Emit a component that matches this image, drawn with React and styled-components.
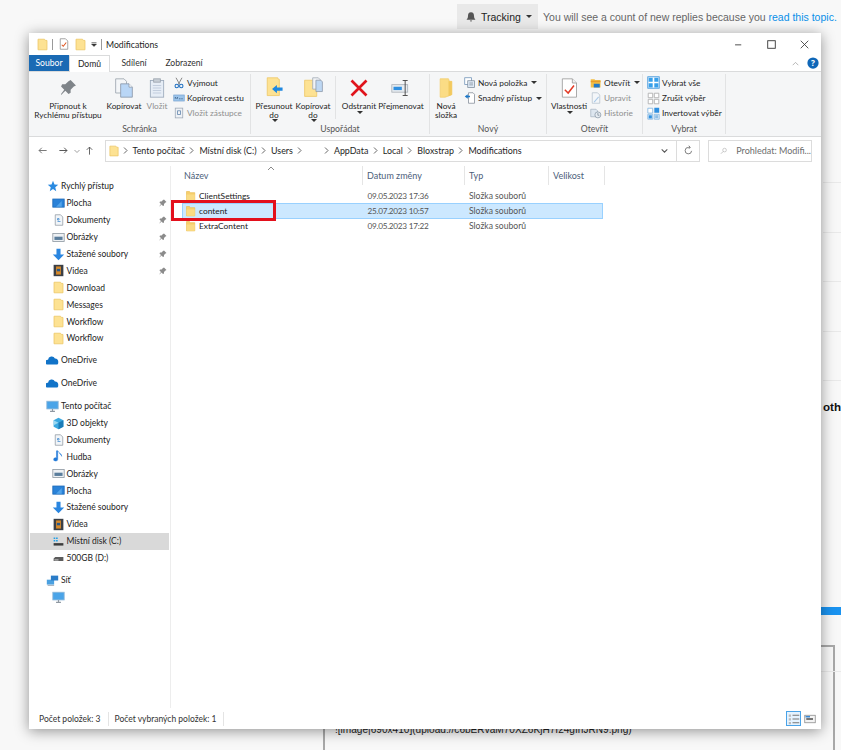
import React from "react";
import styled, { createGlobalStyle } from "styled-components";

const Global = createGlobalStyle`
  html, body { margin: 0; padding: 0; background: #f8f8f8; }
  * { box-sizing: border-box; }
`;

const Page = styled.div`
  position: relative;
  width: 841px;
  height: 750px;
  overflow: hidden;
  background: #f8f8f8;
  font-family: "Liberation Sans", Arial, sans-serif;
`;
const TopicBar = styled.div`
  display: flex;
  align-items: center;
  height: 25px;
  margin: 4px 0 0 457px;
  width: 384px;
  font-size: 10.5px;
  color: #666;
  white-space: nowrap;
`;
const TrackButton = styled.div`
  display: flex;
  align-items: center;
  gap: 4px;
  width: 81px;
  height: 25px;
  padding-left: 8px;
  margin-right: 5px;
  background: #e9e9e9;
  color: #222;
  font-size: 10.5px;
`;
const Link = styled.span`color: #0a8fe8;`;
const Caret = styled.span`
  display: inline-block;
  border: 3px solid transparent;
  border-top: 3px solid ${p => p.$c || "#333"};
  border-bottom: 0;
  margin-left: ${p => p.$ml || 2}px;
  vertical-align: middle;
`;
const Dividers = styled.div`
  margin: 105px 0 0 823px;
  display: flex;
  flex-direction: column;
`;
const Divider = styled.div`
  height: 49.4px;
  border-bottom: 1px solid #e9e9e9;
`;
const CutHeading = styled.div`
  margin: 19px 0 0 823px;
  height: 14px;
  font-size: 11.6px;
  line-height: 14px;
  font-weight: 700;
  color: #111;
`;
const ProgressBar = styled.div`
  margin: 193px 0 0 400px;
  height: 8px;
  background: #1a93f0;
`;
const Composer = styled.div`
  margin: 30px 0 0 323px;
  width: 512px;
  height: 120px;
  border: 2px solid #a8a8a8;
  border-bottom: 0;
  font-size: 10.1px;
  color: #222;
  padding: 77px 0 0 10px;
  white-space: nowrap;
`;
const ComposerRule = styled.div`
  height: 1px;
  background: #e9e9e9;
  margin: -53px -10px 52px;
`;

const Win = styled.div`
  position: absolute;
  left: 29px;
  top: 33px;
  width: 792px;
  height: 696px;
  background: #fff;
  display: flex;
  flex-direction: column;
  font-family: Lato, "Open Sans", sans-serif;
  font-size: 8.6px;
  color: #1e1e1e;
  box-shadow: 0 2px 13px rgba(0,0,0,.42);
  white-space: nowrap;
`;
const TitleBar = styled.div`
  display: flex;
  align-items: center;
  height: 22px;
  padding-left: 7px;
  flex: none;
`;
const QatSep = styled.div`
  width: 1px;
  height: 11px;
  background: #9a9a9a;
  margin: 0 ${p => p.$r || 6}px 0 ${p => p.$l || 5}px;
`;
const QatGap = styled.div`width: ${p => p.$w}px;`;
const Title = styled.div`font-size: 8.7px; flex: 1;`;
const WinControls = styled.div`
  display: flex;
  align-items: center;
  padding-right: 11px;
  gap: 22px;
`;
const TabRow = styled.div`
  display: flex;
  height: 16px;
  flex: none;
  align-items: stretch;
  position: relative;
`;
const FileTab = styled.div`
  width: 40px;
  background: #1a6ab4;
  color: #fff;
  display: flex;
  align-items: center;
  justify-content: center;
`;
const Tab = styled.div`
  width: ${p => p.$w}px;
  display: flex;
  align-items: center;
  justify-content: center;
  color: #333;
  ${p => p.$active && `
    background: #fff;
    border: 1px solid #dadbdc;
    border-bottom: 0;
    height: 17px;
    margin-bottom: -1px;
    z-index: 1;
    color: #1e1e1e;
  `}
`;
const TabRight = styled.div`
  margin-left: auto;
  display: flex;
  align-items: center;
  gap: 7px;
  padding-right: 2px;
`;
const Ribbon = styled.div`
  display: flex;
  height: 66px;
  flex: none;
  background: #f5f6f7;
  border-top: 1px solid #dadbdc;
  border-bottom: 1px solid #dadbdc;
  padding-top: 2px;
`;
const Group = styled.div`
  width: ${p => p.$w}px;
  display: flex;
  flex-direction: column;
  border-right: 1px solid #e2e3e4;
  height: 60px;
  flex: none;
`;
const GroupBody = styled.div`
  display: flex;
  height: 50px;
  padding-left: ${p => p.$pl || 0}px;
`;
const GroupLabel = styled.div`
  text-align: center;
  font-size: 8.7px;
  color: #555;
  line-height: 10px;
`;
const Big = styled.div`
  width: ${p => p.$w}px;
  margin-left: ${p => p.$ml || 0}px;
  display: flex;
  flex-direction: column;
  align-items: center;
  text-align: center;
  line-height: 8.7px;
  font-size: 8.25px;
  color: ${p => p.$off ? "#8f8f8f" : "#1e1e1e"};
`;
const BigIcon = styled.div`
  height: 28px;
  padding-bottom: 1px;
  display: flex;
  align-items: center;
  justify-content: center;
  flex: none;
`;
const BigSep = styled.div`
  width: 1px;
  height: 43px;
  background: #e2e3e4;
  margin: 2px 5px 0 3px;
`;
const SmallCol = styled.div`
  display: flex;
  flex-direction: column;
  margin-left: ${p => p.$ml || 0}px;
  padding-top: 1px;
`;
const Small = styled.div`
  display: flex;
  align-items: center;
  height: 15.4px;
  gap: 2px;
  font-size: 8.3px;
  color: ${p => p.$off ? "#8f8f8f" : "#1e1e1e"};
`;
const AddressRow = styled.div`
  display: flex;
  align-items: center;
  height: 29px;
  padding-bottom: 1.5px;
  flex: none;
`;
const NavButtons = styled.div`
  width: 76px;
  display: flex;
  align-items: center;
  padding-left: 8px;
  flex: none;
`;
const AddressBox = styled.div`
  width: 595px;
  height: 22px;
  border: 1px solid #dcdcdc;
  display: flex;
  align-items: center;
  padding-left: 2px;
  flex: none;
`;
const Crumb = styled.span`
  color: #1e1e1e;
  font-size: 8.9px;
`;
const CrumbArrow = styled.svg`
  width: 5px;
  height: 7px;
  margin: 0 5px 0 ${p => p.$ml ?? 4.5}px;
  flex: none;
`;
const AddressTools = styled.div`
  margin-left: auto;
  display: flex;
  align-items: center;
  height: 100%;
`;
const ChevronCell = styled.div`
  width: 24px;
  display: flex;
  justify-content: center;
`;
const RefreshCell = styled.div`
  width: 23px;
  height: 100%;
  border-left: 1px solid #dcdcdc;
  display: flex;
  align-items: center;
  justify-content: center;
`;
const SearchBox = styled.div`
  width: 104px;
  height: 22px;
  margin-left: 8px;
  border: 1px solid #dcdcdc;
  display: flex;
  align-items: center;
  padding-left: 11px;
  gap: 9px;
  color: #6d6d6d;
  font-size: 9px;
  flex: none;
`;
const Content = styled.div`
  display: flex;
  flex: 1;
  min-height: 0;
`;
const NavPane = styled.div`
  width: 142px;
  flex: none;
  border-right: 1px solid #ededed;
  padding: 12px 1px 0;
  display: flex;
  flex-direction: column;
`;
const NavRow = styled.div`
  display: flex;
  align-items: center;
  height: 16.9px;
  flex: none;
  gap: ${p => p.$child ? 1.5 : 2}px;
  padding-left: ${p => p.$child ? 22 : 16}px;
  margin-top: ${p => p.$mt || 0}px;
  background: ${p => p.$sel ? "#d9d9d9" : "transparent"};
  font-size: 8.5px;
  color: #222;
`;
const NavIconBox = styled.div`
  width: 13px;
  display: flex;
  justify-content: center;
  flex: none;
`;
const PinBox = styled.div`
  margin-left: auto;
  display: flex;
  width: 10px;
`;
const Main = styled.div`
  position: relative;
  flex: 1;
  display: flex;
  flex-direction: column;
`;
const HeaderRow = styled.div`
  display: flex;
  height: 19px;
  flex: none;
  margin-bottom: 3px;
`;
const HeadCell = styled.div`
  position: relative;
  width: ${p => p.$w}px;
  padding-left: ${p => p.$pl || 4}px;
  border-right: 1px solid #e5e5e5;
  display: flex;
  align-items: center;
  color: #4c607a;
  font-size: 9px;
  flex: none;
`;
const SortMark = styled.svg`
  position: absolute;
  left: 96px;
  top: 0;
`;
const FileRow = styled.div`
  display: flex;
  align-items: center;
  width: 421px;
  height: ${p => p.$sel ? 16 : 15}px;
  margin: 0 0 ${p => p.$sel ? -1 : 0}px 11px;
  background: ${p => p.$sel ? "#cce8ff" : "transparent"};
  border: 1px solid ${p => p.$sel ? "#99d1ff" : "transparent"};
  z-index: ${p => p.$sel ? 0 : 1};
`;
const FileName = styled.div`
  width: 181px;
  display: flex;
  align-items: center;
  padding-left: 2px;
  gap: 2px;
  color: #1a1a1a;
  font-size: 8.4px;
`;
const FileDate = styled.div`
  width: 102px;
  padding-left: 3.5px;
  color: #555;
  font-size: 8.2px;
  letter-spacing: -.25px;
`;
const FileType = styled.div`color: #555; font-size: 8.6px; padding-left: 3px;`;
const Highlight = styled.div`
  position: absolute;
  left: 0;
  top: 34px;
  width: 105px;
  height: 21px;
  border: 3px solid #e3101c;
  z-index: 3;
`;
const StatusBar = styled.div`
  height: 21px;
  flex: none;
  display: flex;
  align-items: center;
  padding: 0 5px 0 10px;
  font-size: 8.5px;
  color: #333;
`;
const StatusItem = styled.div`
  padding-right: 7px;
  margin-right: 6px;
  border-right: 1px solid #e4e4e4;
  line-height: 14px;
`;
const ViewButtons = styled.div`
  margin-left: auto;
  display: flex;
  align-items: center;
  gap: 3px;
`;
const ViewActive = styled.div`
  width: 15px;
  height: 15px;
  border: 1px solid #4aa3e8;
  background: #e5f3ff;
  display: flex;
  align-items: center;
  justify-content: center;
`;

/* ---------- icons ---------- */
const Svg = ({ s = 14, h, vb = "0 0 16 16", children }) => (
  <svg width={s} height={h || s} viewBox={vb} style={{ display: "block" }}>{children}</svg>
);
const PlainFolder = ({ s = 13 }) => (
  <Svg s={s}><path d="M2.5 1.5h8l1 1.5h2v11.5h-11z" fill="#fde293" stroke="#ecc767" /></Svg>
);
const FileFolder = () => (
  <Svg s={12}><path d="M2 2h4l1 1.5h6v11H2z" fill="#f7cf6c" stroke="#e8b94a" strokeWidth=".8" /><rect x="2" y="6" width="11" height="8.5" fill="#fadb84" /></Svg>
);
const CheckDoc = ({ s = 12 }) => (
  <Svg s={s}><path d="M3 1h7l3 3v11H3z" fill="#fff" stroke="#8a8a8a" /><path d="M5 9l2 2 4-5" fill="none" stroke="#e0551f" strokeWidth="1.4" /></Svg>
);
const Pin = ({ s = 8, c = "#8b8b8b" }) => (
  <Svg s={s}><path d="M10 1l5 5-2 1-3 3 0 3-2 1-3-3-4 4 0-1 3-4-3-3 1-2 3 0 3-3z" fill={c} /></Svg>
);
const BigPin = () => <Pin s={17} c="#7f8489" />;
const CopyBig = () => (
  <Svg s={20} vb="0 0 24 24">
    <path d="M2 1h10l3 3v14H2z" fill="#f4f6f8" stroke="#9aa3ad" />
    <path d="M8 7h10l4 4v12H8z" fill="#b9d6f6" stroke="#8b98a8" />
    <path d="M18 7v4h4" fill="#fff" stroke="#8b98a8" />
  </Svg>
);
const PasteBig = () => (
  <Svg s={20} vb="0 0 24 24">
    <rect x="4" y="3" width="16" height="20" fill="#e6edf6" stroke="#9aa8ba" />
    <rect x="8" y="1" width="8" height="4" fill="#c7ced6" stroke="#9aa3ad" />
    <path d="M7 9h10M7 12h10M7 15h10M7 18h10" stroke="#bcc8d8" />
  </Svg>
);
const Scissors = () => (
  <Svg s={12}>
    <path d="M4 1l5 9M12 1L7 10" stroke="#7a7a7a" strokeWidth="1.2" fill="none" />
    <circle cx="5" cy="12" r="2.3" fill="none" stroke="#1f6fc0" strokeWidth="1.4" />
    <circle cx="11" cy="12" r="2.3" fill="none" stroke="#1f6fc0" strokeWidth="1.4" />
  </Svg>
);
const PathIcon = () => (
  <Svg s={12}><rect x="1" y="4" width="14" height="8" fill="#9cc4ea" stroke="#7aa6d2" /><path d="M3 9V7l1.5 1.5L6 7v2M8 9h2M11 9h2" stroke="#264a70" fill="none" strokeWidth=".8" /></Svg>
);
const ShortcutIcon = () => (
  <Svg s={12}><rect x="3" y="1.5" width="10" height="13" fill="#eef1f5" stroke="#9aa6b4" /><path d="M6 5h4v5H6z" fill="none" stroke="#5a7fa8" /></Svg>
);
const MoveBig = () => (
  <Svg s={21} vb="0 0 26 26">
    <path d="M4 1h13l1 2h1v20H4z" fill="#fde293" stroke="#edc766" />
    <path d="M10 15l6-5v3h7v4h-7v3z" fill="#1e88e0" />
  </Svg>
);
const CopyToBig = () => (
  <Svg s={21} vb="0 0 26 26">
    <path d="M2 4h13l1 1h1v19H2z" fill="#fde293" stroke="#edc766" />
    <path d="M12 1h7l3 3v11H12z" fill="#f1f3f6" stroke="#a2abb6" />
    <path d="M16 4h6l2 2v12h-8z" fill="#bdd7f3" stroke="#8f9cad" />
  </Svg>
);
const DeleteBig = () => (
  <Svg s={20} vb="0 0 24 24"><path d="M3 3l18 18M21 3L3 21" stroke="#e0141c" strokeWidth="3.2" fill="none" /></Svg>
);
const RenameBig = () => (
  <Svg s={20} vb="0 0 24 24">
    <rect x="1" y="8" width="19" height="9" fill="#e8ecf0" stroke="#a9b0b8" />
    <rect x="3" y="10.5" width="10" height="4" fill="#2f8fe0" />
    <path d="M14 3h6M17 3v18M14 21h6" stroke="#444" strokeWidth="1.1" fill="none" />
  </Svg>
);
const NewFolderBig = () => (
  <Svg s={20} vb="0 0 24 24">
    <path d="M5 1h10l1 3h3v16l-8 3H5z" fill="#fbdc85" stroke="#f2cf72" />
    <path d="M15 4l4 0v16l-4 2z" fill="#f2c95f" />
  </Svg>
);
const NewItem = () => (
  <Svg s={12}><rect x="1" y="1" width="9" height="9" fill="#fff" stroke="#6c8fb5" /><rect x="5" y="5" width="9" height="9" fill="#dfeaf6" stroke="#7c8a9a" /><path d="M7 8h5M7 10.5h5" stroke="#7c8a9a" /></Svg>
);
const EasyAccess = () => (
  <Svg s={12}><path d="M6 1h6l2 2v12H6z" fill="#fff" stroke="#808a96" /><path d="M1 6l4-3v2h3v2H5v2z" fill="#1e78c8" /></Svg>
);
const PropsBig = () => (
  <Svg s={20} vb="0 0 24 24">
    <path d="M4 1h12l5 5v17H4z" fill="#fff" stroke="#9a9a9a" />
    <path d="M16 1v5h5" fill="#f0f0f0" stroke="#9a9a9a" />
    <path d="M7 14l4 4 7-9" fill="none" stroke="#e23a26" strokeWidth="1.8" />
  </Svg>
);
const OpenIcon = () => (
  <Svg s={12}><path d="M1 3h5l1 1h7v10H1z" fill="#f4bf46" /><rect x="1" y="5" width="13" height="2" fill="#e89c2a" /><rect x="5" y="9" width="8" height="5" fill="#2279c8" /></Svg>
);
const EditIcon = () => (
  <Svg s={12}><path d="M3 1h7l3 3v11H3z" fill="#f3f6f9" stroke="#b4c0cc" /><path d="M5 13l6-7 1 1-6 7z" fill="#a8c7e6" /></Svg>
);
const HistoryIcon = () => (
  <Svg s={12}><path d="M1 3h7l2 2v8H1z" fill="#dde6ef" stroke="#a6b4c2" /><circle cx="10.5" cy="10.5" r="4" fill="#e6ecf2" stroke="#8897a6" /><path d="M10.5 8v3h2" stroke="#7a8794" fill="none" /></Svg>
);
const SelectAll = () => (
  <Svg s={13}><rect x="1" y="1" width="14" height="14" fill="#fff" stroke="#2a8ad8" /><path d="M2 2h5v5H2zM9 2h5v5H9zM2 9h5v5H2zM9 9h5v5H9z" fill="#38a0ea" /></Svg>
);
const SelectNone = () => (
  <Svg s={13}><path d="M1.5 1.5h5.500v5.500h-5.500zM9 1.500h5.500v5.500H9zM1.500 9h5.500v5.500h-5.500zM9 9h5.500v5.500H9z" fill="#fff" stroke="#a9a9a9" /></Svg>
);
const SelectInvert = () => (
  <Svg s={13}><path d="M1 9h6v6H1zM9 9h6v6H9zM1 1.500h6v6H1z" fill="#fff" stroke="#7fb4e0" /><path d="M9 1h6v6H9zM2 10h4v4H2z" fill="#2f90e0" /><path d="M10 10h4v4h-4z" fill="#8fbfe6" /></Svg>
);
const Star = () => (
  <Svg s={12}><path d="M8 1l2 5 5 .3-4 3.400 1.300 5.300L8 12l-4.300 3 1.300-5.300-4-3.400L6 6z" fill="#2a8ae0" /></Svg>
);
const Desktop = () => (
  <Svg s={13}><rect x="1" y="2.500" width="14" height="10" fill="#2a82d8" stroke="#1b69b8" /><path d="M5 12l7-7v7z" fill="#52a4ea" /></Svg>
);
const Docs = () => (
  <Svg s={12}><path d="M3 1h7l3 3v11H3z" fill="#f2f5f8" stroke="#8f98a2" /><path d="M6 6h2v2H6zM6 10h4" stroke="#3f8ad0" fill="none" /></Svg>
);
const Pictures = () => (
  <Svg s={13}><rect x="1" y="3" width="14" height="10" fill="#eef1f4" stroke="#8f98a2" /><rect x="3" y="7" width="10" height="4" fill="#5a7d9c" /></Svg>
);
const Downloads = () => (
  <Svg s={13}><path d="M5.500 1h5v7H15l-7 7-7-7h4.500z" fill="#2a86e0" /></Svg>
);
const Videos = () => (
  <Svg s={13}><rect x="2" y="1" width="12" height="14" fill="#3a3f46" /><rect x="5" y="3" width="6" height="10" fill="#d88a2a" /><path d="M6 6h4v3H6z" fill="#2a5a8a" /></Svg>
);
const Cloud = () => (
  <Svg s={13}><path d="M2 13a3 3 0 0 1 .5-6A4.500 4.500 0 0 1 11 5.500 3.800 3.800 0 0 1 15 10a3 3 0 0 1-1 3z" fill="#1173c8" /></Svg>
);
const Computer = () => (
  <Svg s={13}><rect x="1" y="1.500" width="14" height="9.500" fill="#4aa4e8" stroke="#8fb8d8" /><path d="M5 14h6M8 11v3" stroke="#8f98a2" strokeWidth="1.400" /></Svg>
);
const Objects3D = () => (
  <Svg s={13}><path d="M8 1l6 3v8l-6 3-6-3V4z" fill="#3aa8e0" /><path d="M8 7l6-3v8l-6 3z" fill="#1b7cb8" /><path d="M2 4l6 3-6 3z" fill="#9ad8f2" /></Svg>
);
const Music = () => (
  <Svg s={13}><path d="M7 1v10.500a2.500 2 0 1 1-1.500-1.800V1zM7 1c1 3 5 3 5 7" fill="#1f78d8" stroke="#1f78d8" strokeWidth=".6" /></Svg>
);
const DiskC = () => (
  <Svg s={13}><path d="M2 3h2v2H2zM5 3h2v2H5zM2 6h2v2H2zM5 6h2v2H5z" fill="#21a0e8" /><rect x="2" y="10" width="12" height="3" fill="#3c3c3c" /></Svg>
);
const DiskD = () => (
  <Svg s={13}><path d="M2 8l2-2h10v5H2z" fill="#5c5c5c" /><rect x="3" y="9" width="5" height="1.500" fill="#bcbcbc" /></Svg>
);
const Network = () => (
  <Svg s={13}><rect x="1" y="7" width="9" height="6" fill="#4aa0e0" /><rect x="6" y="2" width="9" height="6" fill="#2a7cc8" /><path d="M2 14h8" stroke="#8a9aaa" /></Svg>
);
const Arrow = ({ d, c = "#6a6a6a" }) => (
  <Svg s={11}><path d={d} stroke={c} fill="none" strokeWidth="1.300" /></Svg>
);
const ChevronDownIcon = () => <Svg s={9}><path d="M3 6l5 5 5-5" stroke="#555" fill="none" strokeWidth="1.800" /></Svg>;
const Refresh = () => <Svg s={11}><path d="M12.500 8.500A4.700 4.700 0 1 1 8 3.500h2M8.500 1l2 2.500-2 2" stroke="#666" fill="none" strokeWidth="1.200" /></Svg>;
const SearchIcon = () => <Svg s={10}><circle cx="10" cy="6" r="4" fill="none" stroke="#a5a5a5" strokeWidth="1.200" /><path d="M7 9l-5 5" stroke="#a5a5a5" strokeWidth="1.400" /></Svg>;
const ArrowSep = ({ ml }) => <CrumbArrow $ml={ml} viewBox="0 0 5 7"><path d="M1 .5L4 3.500 1 6.500" stroke="#666" fill="none" /></CrumbArrow>;

const navItems = [
  { t: "Rychlý přístup", i: Star },
  { t: "Plocha", i: Desktop, c: 1, pin: 1 },
  { t: "Dokumenty", i: Docs, c: 1, pin: 1 },
  { t: "Obrázky", i: Pictures, c: 1, pin: 1 },
  { t: "Stažené soubory", i: Downloads, c: 1, pin: 1 },
  { t: "Videa", i: Videos, c: 1, pin: 1 },
  { t: "Download", i: PlainFolder, c: 1 },
  { t: "Messages", i: PlainFolder, c: 1 },
  { t: "Workflow", i: PlainFolder, c: 1 },
  { t: "Workflow", i: PlainFolder, c: 1 },
  { t: "OneDrive", i: Cloud, mt: 5 },
  { t: "OneDrive", i: Cloud, mt: 6 },
  { t: "Tento počítač", i: Computer, mt: 6 },
  { t: "3D objekty", i: Objects3D, c: 1 },
  { t: "Dokumenty", i: Docs, c: 1 },
  { t: "Hudba", i: Music, c: 1 },
  { t: "Obrázky", i: Pictures, c: 1 },
  { t: "Plocha", i: Desktop, c: 1 },
  { t: "Stažené soubory", i: Downloads, c: 1 },
  { t: "Videa", i: Videos, c: 1 },
  { t: "Místní disk (C:)", i: DiskC, c: 1, sel: 1 },
  { t: "500GB (D:)", i: DiskD, c: 1 },
  { t: "Síť", i: Network, mt: 5 },
  { t: "", i: Computer, c: 1, mt: 1 },
];
const files = [
  { n: "ClientSettings", d: "09.05.2023 17:36" },
  { n: "content", d: "25.07.2023 10:57", sel: 1 },
  { n: "ExtraContent", d: "09.05.2023 17:22" },
];
const crumbs = ["Tento počítač", "Místní disk (C:)", "Users", "", "AppData", "Local", "Bloxstrap", "Modifications"];

export default function App() {
  return (
    <Page>
      <Global />
      <TopicBar>
        <TrackButton>
          <Svg s={12}><path d="M8 1.500c-3 0-4 2-4 5 0 3-1.500 4-2 5h12c-.5-1-2-2-2-5 0-3-1-5-4-5zM6.500 12.500a1.500 1.500 0 0 0 3 0z" fill="#555" /></Svg>
          <span>Tracking</span>
          <Caret $ml={1} />
        </TrackButton>
        You will see a count of new replies because you&nbsp;<Link>read this topic.</Link>
      </TopicBar>
      <Dividers>
        {[0, 1, 2, 3, 4].map(i => <Divider key={i} />)}
      </Dividers>
      <CutHeading>oth</CutHeading>
      <ProgressBar />
      <Composer>
        <ComposerRule />
        ![image|690x410](upload://c6bERvaM70XZ6KjH7I24gInJRN9.png)
      </Composer>

      <Win>
        <TitleBar>
          <PlainFolder s={13} />
          <QatSep $l={3} $r={5} />
          <CheckDoc s={12} />
          <QatGap $w={4} />
          <PlainFolder s={13} />
          <QatGap $w={3} />
          <Svg s={8}><path d="M3 5h10M3 8h10l-5 5z" stroke="#333" fill="#333" strokeWidth="1" /></Svg>
          <QatSep $l={3} $r={4} />
          <Title>Modifications</Title>
          <WinControls>
            <Svg s={11}><path d="M3 8.500h9" stroke="#555" strokeWidth="1.500" /></Svg>
            <Svg s={11}><rect x="2.500" y="2.500" width="11" height="11" fill="none" stroke="#333" strokeWidth="1.300" /></Svg>
            <Svg s={11}><path d="M2.500 2.500l11 11M13.500 2.500l-11 11" stroke="#333" strokeWidth="1.200" /></Svg>
          </WinControls>
        </TitleBar>
        <TabRow>
          <FileTab>Soubor</FileTab>
          <Tab $w={41} $active>Domů</Tab>
          <Tab $w={48}>Sdílení</Tab>
          <Tab $w={52}>Zobrazení</Tab>
          <TabRight>
            <Svg s={9}><path d="M3 11l5-5 5 5" stroke="#aaa" fill="none" strokeWidth="1.500" /></Svg>
            <Svg s={12}><circle cx="8" cy="8" r="7.500" fill="#0f67b8" /><text x="8" y="12" fontSize="11" fontWeight="700" textAnchor="middle" fill="#fff" fontFamily="Open Sans">?</text></Svg>
          </TabRight>
        </TabRow>
        <Ribbon>
          <Group $w={222}>
            <GroupBody $pl={4}>
              <Big $w={70}><BigIcon><BigPin /></BigIcon>Připnout k<br />Rychlému přístupu</Big>
              <Big $w={42} $ml={0}><BigIcon><CopyBig /></BigIcon>Kopírovat</Big>
              <Big $w={24} $off><BigIcon><PasteBig /></BigIcon>Vložit</Big>
              <SmallCol $ml={4}>
                <Small><Scissors />Vyjmout</Small>
                <Small><PathIcon />Kopírovat cestu</Small>
                <Small $off><ShortcutIcon />Vložit zástupce</Small>
              </SmallCol>
            </GroupBody>
            <GroupLabel>Schránka</GroupLabel>
          </Group>
          <Group $w={179}>
            <GroupBody $pl={3}>
              <Big $w={40}><BigIcon><MoveBig /></BigIcon>Přesunout<br />do <Caret /></Big>
              <Big $w={38}><BigIcon><CopyToBig /></BigIcon>Kopírovat<br />do <Caret /></Big>
              <BigSep />
              <Big $w={36}><BigIcon><DeleteBig /></BigIcon>Odstranit<br /><Caret /></Big>
              <Big $w={48}><BigIcon><RenameBig /></BigIcon>Přejmenovat</Big>
            </GroupBody>
            <GroupLabel>Uspořádat</GroupLabel>
          </Group>
          <Group $w={117}>
            <GroupBody $pl={3}>
              <Big $w={26}><BigIcon><NewFolderBig /></BigIcon>Nová<br />složka</Big>
              <SmallCol $ml={5}>
                <Small><NewItem />Nová položka <Caret /></Small>
                <Small><EasyAccess />Snadný přístup <Caret /></Small>
              </SmallCol>
            </GroupBody>
            <GroupLabel>Nový</GroupLabel>
          </Group>
          <Group $w={96}>
            <GroupBody $pl={3}>
              <Big $w={38}><BigIcon><PropsBig /></BigIcon>Vlastnosti<br /><Caret /></Big>
              <SmallCol $ml={2}>
                <Small><OpenIcon />Otevřít <Caret /></Small>
                <Small $off><EditIcon />Upravit</Small>
                <Small $off><HistoryIcon />Historie</Small>
              </SmallCol>
            </GroupBody>
            <GroupLabel>Otevřít</GroupLabel>
          </Group>
          <Group $w={83}>
            <GroupBody $pl={4}>
              <SmallCol>
                <Small><SelectAll />Vybrat vše</Small>
                <Small><SelectNone />Zrušit výběr</Small>
                <Small><SelectInvert />Invertovat výběr</Small>
              </SmallCol>
            </GroupBody>
            <GroupLabel>Vybrat</GroupLabel>
          </Group>
        </Ribbon>
        <AddressRow>
          <NavButtons>
            <Arrow d="M14 8H3M7 4L3 8l4 4" />
            <QatGap $w={10} />
            <Arrow d="M2 8h11M9 4l4 4-4 4" c="#444" />
            <QatGap $w={4} />
            <Svg s={8}><path d="M3 6l5 5 5-5" stroke="#888" fill="none" strokeWidth="1.600" /></Svg>
            <QatGap $w={3} />
            <Arrow d="M8 14V3M4 7l4-4 4 4" c="#555" />
          </NavButtons>
          <AddressBox>
            <PlainFolder s={12} />
            <ArrowSep ml={2.5} />
            {crumbs.map((c, i) => (
              <React.Fragment key={i}>
                {c ? <Crumb>{c}</Crumb> : <QatGap $w={12} />}
                {i < crumbs.length - 1 && <ArrowSep />}
              </React.Fragment>
            ))}
            <AddressTools>
              <ChevronCell><ChevronDownIcon /></ChevronCell>
              <RefreshCell><Refresh /></RefreshCell>
            </AddressTools>
          </AddressBox>
          <SearchBox><SearchIcon />Prohledat: Modifi...</SearchBox>
        </AddressRow>
        <Content>
          <NavPane>
            {navItems.map((n, idx) => {
              const I = n.i;
              return (
                <NavRow key={idx} $child={n.c} $sel={n.sel} $mt={n.mt}>
                  <NavIconBox><I /></NavIconBox>
                  <span>{n.t}</span>
                  {n.pin && <PinBox><Pin /></PinBox>}
                </NavRow>
              );
            })}
          </NavPane>
          <Main>
            <HeaderRow>
              <HeadCell $w={192} $pl={13}>
                Název
                <SortMark width="8" height="5" viewBox="0 0 8 5"><path d="M1 4l3-3 3 3" stroke="#8a8a8a" fill="none" /></SortMark>
              </HeadCell>
              <HeadCell $w={102}>Datum změny</HeadCell>
              <HeadCell $w={84}>Typ</HeadCell>
              <HeadCell $w={56}>Velikost</HeadCell>
            </HeaderRow>
            {files.map(f => (
              <FileRow key={f.n} $sel={f.sel}>
                <FileName><FileFolder />{f.n}</FileName>
                <FileDate>{f.d}</FileDate>
                <FileType>Složka souborů</FileType>
              </FileRow>
            ))}
            <Highlight />
          </Main>
        </Content>
        <StatusBar>
          <StatusItem>Počet položek: 3</StatusItem>
          <StatusItem>Počet vybraných položek: 1</StatusItem>
          <ViewButtons>
            <ViewActive>
              <Svg s={12}><path d="M1 2h3v3H1zM1 7h3v3H1zM1 12h3v3H1z" fill="#bbb" /><path d="M6 3h9M6 8h9M6 13h9" stroke="#777" strokeWidth="1.400" /></Svg>
            </ViewActive>
            <Svg s={12}><rect x="1" y="3" width="14" height="10" fill="#f3f3f3" stroke="#888" /><rect x="2" y="4" width="6" height="2" fill="#3a8ad8" /><path d="M3 8h9" stroke="#222" strokeWidth="1.600" /></Svg>
          </ViewButtons>
        </StatusBar>
      </Win>
    </Page>
  );
}
